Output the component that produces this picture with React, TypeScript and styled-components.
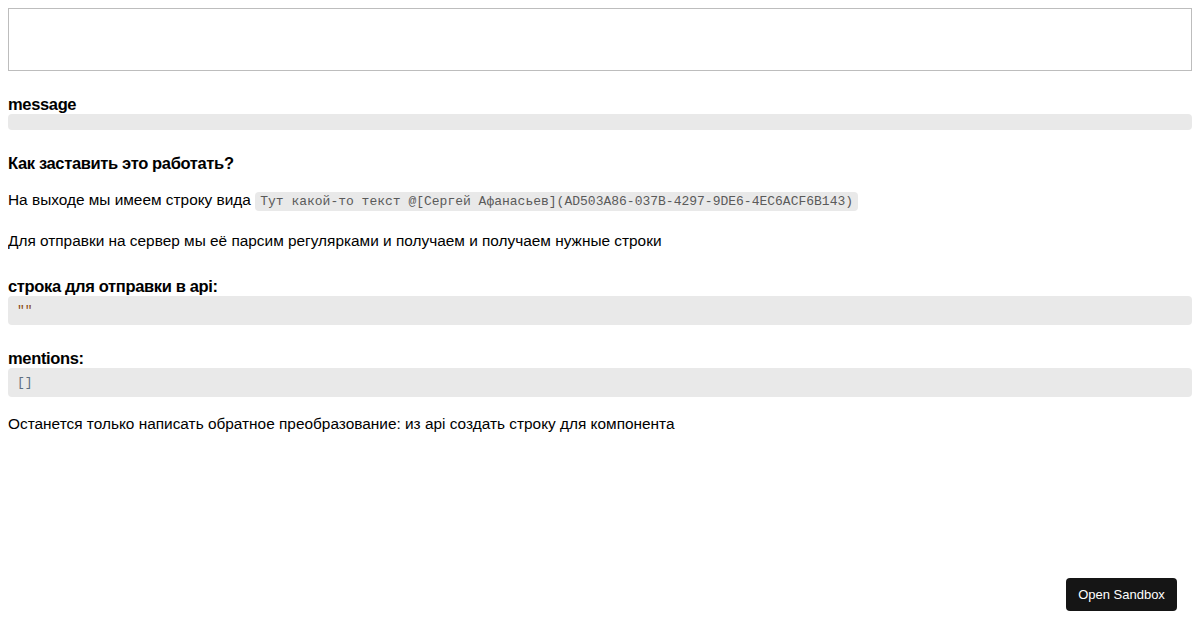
import styled, { createGlobalStyle } from 'styled-components';

const GlobalStyle = createGlobalStyle`
  body {
    margin: 8px;
    font-family: "Liberation Sans", Arial, sans-serif;
    color: #000;
    background: #fff;
  }
`;

const App = () => {
  return (
    <>
      <GlobalStyle />
      <Page>
        <InputBox />

        <Heading>message</Heading>
        <CodeBlock />

        <Heading>Как заставить это работать?</Heading>
        <Paragraph>
          На выходе мы имеем строку вида{' '}
          <InlineCode>Тут какой-то текст @[Сергей Афанасьев](AD503A86-037B-4297-9DE6-4EC6ACF6B143)</InlineCode>
        </Paragraph>
        <Paragraph>Для отправки на сервер мы её парсим регулярками и получаем и получаем нужные строки</Paragraph>

        <Heading>строка для отправки в api:</Heading>
        <CodeBlock>
          <Token $kind="string">""</Token>
        </CodeBlock>

        <Heading>mentions:</Heading>
        <CodeBlock>
          <Token $kind="bracket">[]</Token>
        </CodeBlock>

        <Paragraph>Останется только написать обратное преобразование: из api создать строку для компонента</Paragraph>
      </Page>
      <SandboxButton>Open Sandbox</SandboxButton>
    </>
  );
};

export default App;

const Page = styled.div`
  display: flex;
  flex-direction: column;
`;

const InputBox = styled.div`
  height: 61px;
  border: 1px solid #bdbdbd;
`;

const Heading = styled.h4`
  margin: 23px 0 0;
  font-size: 16.5px;
  line-height: 20px;
  font-weight: 700;
  letter-spacing: -0.35px;
`;

const CodeBlock = styled.pre`
  margin: 0;
  padding: 8px 9px;
  background: #e9e9e9;
  border-radius: 4px;
  font-family: "Liberation Mono", "Courier New", monospace;
  font-size: 13px;
  line-height: 13px;
`;

const Token = styled.span<{ $kind: 'string' | 'bracket' }>`
  color: ${p => (p.$kind === 'string' ? '#8a4a14' : '#5d6f80')};
`;

const Paragraph = styled.p`
  margin: 15px 0 0;
  font-size: 15.4px;
  line-height: 24px;

  & + & {
    margin-top: 15px;
  }
`;

const InlineCode = styled.code`
  padding: 2px 5px;
  background: #e9e9e9;
  border-radius: 4px;
  color: #5a5a5a;
  font-family: "Liberation Mono", "Courier New", monospace;
  font-size: 13px;
`;

const SandboxButton = styled.button`
  position: fixed;
  right: 23px;
  bottom: 19px;
  width: 111px;
  height: 33px;
  border: none;
  border-radius: 4px;
  background: #151515;
  color: #fff;
  font-family: "Liberation Sans", Arial, sans-serif;
  font-size: 13px;
  cursor: pointer;
`;
